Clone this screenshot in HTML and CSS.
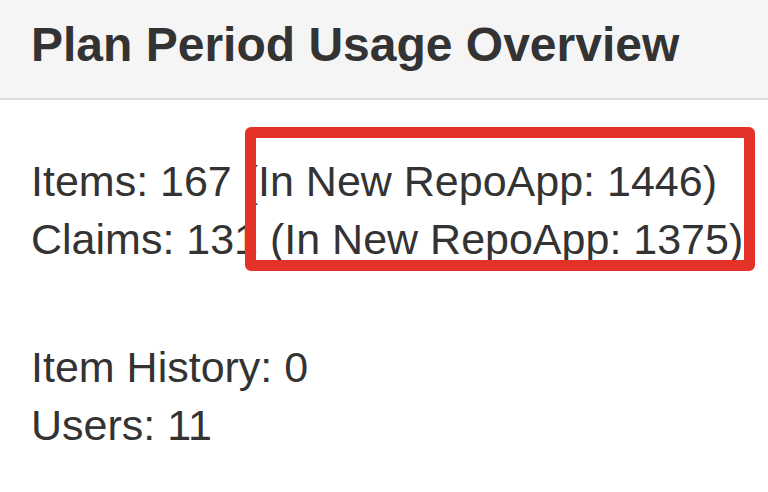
FILE: index.html
```html
<!DOCTYPE html>
<html lang="en">
<head>
    <meta charset="UTF-8">
    <meta name="viewport" content="width=device-width, initial-scale=1.0">
    <title>Plan Period Usage Overview</title>
    <link rel="stylesheet" href="styles.css">
</head>
<body>
    <div class="panel">
        <div class="panel-heading">
            <h3 class="panel-title">Plan Period Usage Overview</h3>
        </div>
        <div class="panel-body">
            <p class="usage">
                Items: 167 (In New RepoApp: 1446)<br>
                Claims: 131 (In New RepoApp: 1375)
            </p>
            <p class="usage">
                Item History: 0<br>
                Users: 11
            </p>
            <div class="highlight"></div>
        </div>
    </div>
</body>
</html>
```

FILE: styles.css
```css
body {
    margin: 0;
    padding: 0;
    background-color: #fff;
    font-family: "Liberation Sans", Arial, sans-serif;
    color: #333;
}

.panel {
    width: 768px;
    height: 492px;
    overflow: hidden;
}

.panel-heading {
    background-color: #f5f5f5;
    border-bottom: 2px solid #dcdcdc;
    padding: 16px 30px 24px 31px;
}

.panel-title {
    margin: 0;
    font-size: 48px;
    font-weight: bold;
    line-height: 58px;
    color: #333;
}

.panel-body {
    position: relative;
    padding: 52px 29px 0 31px;
}

.usage {
    margin: 0 0 70px 0;
    font-size: 43px;
    line-height: 58px;
    white-space: nowrap;
}

.highlight {
    position: absolute;
    left: 245px;
    top: 27px;
    width: 488px;
    height: 122px;
    border: 11px solid #e53228;
    border-radius: 6px;
}
```
